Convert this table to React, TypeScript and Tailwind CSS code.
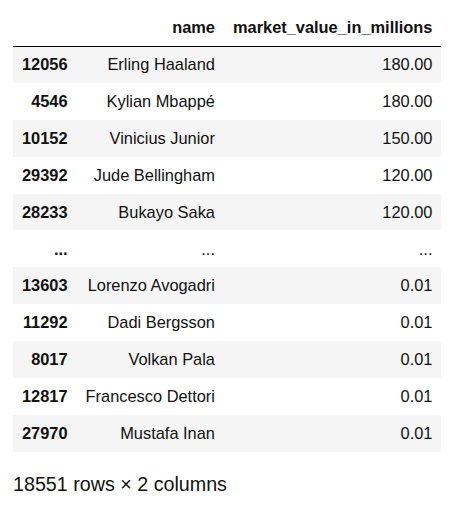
import React from "react";

const rows: [string, string, string][] = [
  ["12056", "Erling Haaland", "180.00"],
  ["4546", "Kylian Mbappé", "180.00"],
  ["10152", "Vinicius Junior", "150.00"],
  ["29392", "Jude Bellingham", "120.00"],
  ["28233", "Bukayo Saka", "120.00"],
  ["...", "...", "..."],
  ["13603", "Lorenzo Avogadri", "0.01"],
  ["11292", "Dadi Bergsson", "0.01"],
  ["8017", "Volkan Pala", "0.01"],
  ["12817", "Francesco Dettori", "0.01"],
  ["27970", "Mustafa Inan", "0.01"],
];

export default function App() {
  return (
    <div
      className="bg-white w-[474px] h-[514px] text-[#111] pl-[13px] pt-[10px] overflow-hidden"
      style={{ fontFamily: '"Liberation Sans", Arial, sans-serif' }}
    >
      <table className="border-collapse text-[16.4px] whitespace-nowrap">
        <thead>
          <tr className="border-b-[1.5px] border-black h-[36px]">
            <th className="px-[9px]"></th>
            <th className="px-[9px] text-right font-bold">name</th>
            <th className="px-[9px] text-right font-bold">market_value_in_millions</th>
          </tr>
        </thead>
        <tbody>
          {rows.map((r, i) => (
            <tr key={i} className={`h-[36.9px] ${i % 2 === 0 ? "bg-[#f5f5f5]" : "bg-white"}`}>
              <th className="px-[9px] text-right font-bold">{r[0]}</th>
              <td className="px-[9px] text-right">{r[1]}</td>
              <td className="px-[9px] text-right">{r[2]}</td>
            </tr>
          ))}
        </tbody>
      </table>
      <p className="text-[19.7px] leading-[24px] mt-[20px]">18551 rows × 2 columns</p>
    </div>
  );
}
